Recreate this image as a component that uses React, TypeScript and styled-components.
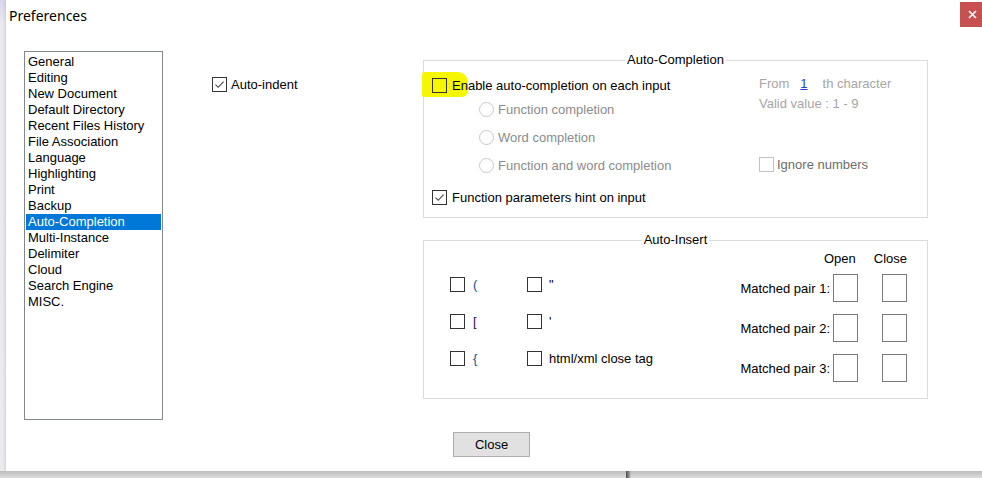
import { Fragment } from 'react';
import styled, { createGlobalStyle } from 'styled-components';

const GlobalStyle = createGlobalStyle`
  html, body {
    margin: 0;
    padding: 0;
  }
  body {
    width: 982px;
    height: 478px;
    overflow: hidden;
    font-family: "Liberation Sans", Arial, sans-serif;
    font-size: 13px;
    color: #000;
  }
`;

const Page = styled.div`
  width: 982px;
  height: 478px;
  display: flex;
  flex-direction: column;
  background: linear-gradient(to bottom, #d9d6ee 0, #e9e9ee 24px, #ececee 100%);
`;

const Dialog = styled.div`
  margin-left: 6px;
  height: 471px;
  flex: none;
  background: #fff;
  display: flex;
  flex-direction: column;
  overflow: hidden;
  box-shadow: -1px 0 3px rgba(0, 0, 0, 0.12);
`;

const BehindWindow = styled.div`
  height: 7px;
  flex: none;
  background:
    linear-gradient(to right, transparent 626px, #4a4a4a 626px, #8c8c8c 629px, transparent 631px),
    linear-gradient(to bottom, #bcbcbc, #dedede);
`;

const TitleBar = styled.div`
  height: 30px;
  display: flex;
  justify-content: space-between;
  align-items: flex-start;
`;

const Title = styled.div`
  padding: 6px 0 0 3px;
  font-family: "Noto Sans", sans-serif;
  font-size: 14px;
  line-height: 20px;
`;

const CloseX = styled.div`
  margin-top: 2px;
  width: 22px;
  height: 25px;
  background: #c75050;
  display: flex;
  align-items: center;
  justify-content: center;
  padding-left: 3px;
  box-sizing: border-box;
`;

const Content = styled.div`
  display: flex;
  align-items: flex-start;
`;

const ListBox = styled.div`
  margin: 21px 0 0 18px;
  width: 139px;
  height: 369px;
  box-sizing: border-box;
  border: 1px solid #828790;
  padding: 2px 1px;
  flex: none;
`;

const ListItem = styled.div<{ $selected?: boolean }>`
  height: 16px;
  line-height: 16px;
  padding-left: 2px;
  background: ${(p) => (p.$selected ? '#0078d7' : 'transparent')};
  color: ${(p) => (p.$selected ? '#fff' : '#000')};
  white-space: nowrap;
`;

const MiddleCol = styled.div`
  width: 260px;
  flex: none;
  box-sizing: border-box;
  padding: 46px 0 0 49px;
`;

const RightCol = styled.div`
  width: 505px;
  flex: none;
  margin-top: 30px;
  display: flex;
  flex-direction: column;
  gap: 22px;
`;

const Group = styled.div<{ $height: number }>`
  position: relative;
  height: ${(p) => p.$height}px;
  box-sizing: border-box;
  border: 1px solid #dcdcdc;
  display: flex;
`;

const GroupTitle = styled.div`
  position: absolute;
  top: -9px;
  left: 50%;
  transform: translateX(-50%);
  background: #fff;
  padding: 0 2px;
  line-height: 16px;
  white-space: nowrap;
`;

const Row = styled.div<{ $indent?: number; $gap?: number; $top?: number }>`
  position: relative;
  display: flex;
  align-items: center;
  height: 16px;
  margin-left: ${(p) => p.$indent ?? 0}px;
  margin-top: ${(p) => p.$top ?? 0}px;
  gap: ${(p) => p.$gap ?? 5}px;
  white-space: nowrap;
`;

const Label = styled.span<{ $tone?: 'normal' | 'disabled' | 'faint' | 'muted' }>`
  position: relative;
  color: ${(p) =>
    p.$tone === 'disabled'
      ? '#8b8b8b'
      : p.$tone === 'faint'
      ? '#a6a6a6'
      : p.$tone === 'muted'
      ? '#6d6d6d'
      : '#000'};
`;

const Box = styled.span<{ $disabled?: boolean }>`
  position: relative;
  width: 15px;
  height: 15px;
  flex: none;
  box-sizing: border-box;
  border: 1px solid ${(p) => (p.$disabled ? '#c2c2c2' : '#333')};
  display: flex;
  align-items: center;
  justify-content: center;
`;

const Radio = styled.span`
  width: 15px;
  height: 15px;
  flex: none;
  box-sizing: border-box;
  border: 1px solid #c8c8c8;
  border-radius: 50%;
  background: #fff;
`;

const Highlight = styled.span`
  position: absolute;
  left: -10px;
  top: -5px;
  width: 46px;
  height: 25px;
  background: #f6f600;
  border-radius: 3px 10px 6px 2px;
  filter: blur(0.7px);
`;

const CompletionLeft = styled.div`
  width: 327px;
  flex: none;
  padding: 16px 0 0 8px;
  display: flex;
  flex-direction: column;
`;

const RadioList = styled.div`
  margin-top: 8px;
  display: flex;
  flex-direction: column;
  gap: 12px;
`;

const CompletionRight = styled.div`
  padding-top: 14px;
  display: flex;
  flex-direction: column;
  gap: 4px;
`;

const CharLink = styled.span`
  color: #2a3bd6;
  text-decoration: underline;
  margin: 0 15px 0 11px;
`;

const InsertBody = styled.div`
  flex: 1;
  display: flex;
  justify-content: space-between;
  align-items: flex-start;
  padding: 0 20px 0 26px;
`;

const CharGrid = styled.div`
  margin-top: 35px;
  display: grid;
  grid-template-columns: 77px auto;
  row-gap: 21px;
`;

const Bracket = styled.span<{ $color: string }>`
  color: ${(p) => p.$color};
  margin-left: 2px;
`;

const PairGrid = styled.div`
  margin-top: 10px;
  display: grid;
  grid-template-columns: auto 25px 49px;
  row-gap: 12px;
  align-items: center;
`;

const PairHead = styled.div<{ $align: 'start' | 'end'; $shift?: number }>`
  justify-self: ${(p) => p.$align};
  margin-left: ${(p) => p.$shift ?? 0}px;
  line-height: 16px;
  margin-bottom: -5px;
  white-space: nowrap;
`;

const PairLabel = styled.div`
  padding-right: 3px;
  text-align: right;
  white-space: nowrap;
`;

const PairBox = styled.div<{ $end?: boolean }>`
  width: 25px;
  height: 28px;
  box-sizing: border-box;
  border: 1px solid #7a7a7a;
  justify-self: ${(p) => (p.$end ? 'end' : 'start')};
`;

const Footer = styled.div`
  padding: 12px 0 0 447px;
`;

const Button = styled.button`
  width: 77px;
  height: 25px;
  background: #e1e1e1;
  border: 1px solid #adadad;
  font-family: "Liberation Sans", Arial, sans-serif;
  font-size: 13px;
  color: #000;
  padding: 0;
`;

const Check = ({ checked, disabled }: { checked?: boolean; disabled?: boolean }) => (
  <Box $disabled={disabled}>
    {checked && (
      <svg width="11" height="11" viewBox="0 0 11 11">
        <path d="M1.5 5.6 L4.2 8.3 L9.6 2.6" fill="none" stroke="#444" strokeWidth="1.1" />
      </svg>
    )}
  </Box>
);

const pages = [
  'General',
  'Editing',
  'New Document',
  'Default Directory',
  'Recent Files History',
  'File Association',
  'Language',
  'Highlighting',
  'Print',
  'Backup',
  'Auto-Completion',
  'Multi-Instance',
  'Delimiter',
  'Cloud',
  'Search Engine',
  'MISC.',
];

const radios = ['Function completion', 'Word completion', 'Function and word completion'];

const chars = [
  { left: '(', color: '#0d4f96', right: '"' },
  { left: '[', color: '#2e0c44', right: "'" },
  { left: '{', color: '#0d4f96', right: 'html/xml close tag' },
];

export default function App() {
  return (
    <Page>
      <GlobalStyle />
      <Dialog>
        <TitleBar>
          <Title>Preferences</Title>
          <CloseX>
            <svg width="9" height="9" viewBox="0 0 9 9">
              <path d="M1 1 L8 8 M8 1 L1 8" stroke="#fff" strokeWidth="1.6" />
            </svg>
          </CloseX>
        </TitleBar>
        <Content>
          <ListBox>
            {pages.map((p) => (
              <ListItem key={p} $selected={p === 'Auto-Completion'}>
                {p}
              </ListItem>
            ))}
          </ListBox>
          <MiddleCol>
            <Row $gap={4}>
              <Check checked />
              <Label>Auto-indent</Label>
            </Row>
          </MiddleCol>
          <RightCol>
            <Group $height={158}>
              <GroupTitle>Auto-Completion</GroupTitle>
              <CompletionLeft>
                <Row>
                  <Highlight />
                  <Check />
                  <Label>Enable auto-completion on each input</Label>
                </Row>
                <RadioList>
                  {radios.map((r) => (
                    <Row key={r} $indent={47} $gap={4}>
                      <Radio />
                      <Label $tone="disabled">{r}</Label>
                    </Row>
                  ))}
                </RadioList>
                <Row $top={16}>
                  <Check checked />
                  <Label>Function parameters hint on input</Label>
                </Row>
              </CompletionLeft>
              <CompletionRight>
                <Row $gap={0}>
                  <Label $tone="faint">From</Label>
                  <CharLink>1</CharLink>
                  <Label $tone="faint">th character</Label>
                </Row>
                <Row>
                  <Label $tone="faint">Valid value : 1 - 9</Label>
                </Row>
                <Row $top={41} $gap={3}>
                  <Check disabled />
                  <Label $tone="muted">Ignore numbers</Label>
                </Row>
              </CompletionRight>
            </Group>
            <Group $height={159}>
              <GroupTitle>Auto-Insert</GroupTitle>
              <InsertBody>
                <CharGrid>
                  {chars.map((c) => (
                    <Fragment key={c.left}>
                      <Row $gap={6}>
                        <Check />
                        <Bracket $color={c.color}>{c.left}</Bracket>
                      </Row>
                      <Row $gap={7}>
                        <Check />
                        <Label>{c.right}</Label>
                      </Row>
                    </Fragment>
                  ))}
                </CharGrid>
                <PairGrid>
                  <span />
                  <PairHead $align="start" $shift={-9}>Open</PairHead>
                  <PairHead $align="end">Close</PairHead>
                  {[1, 2, 3].map((n) => (
                    <Fragment key={n}>
                      <PairLabel>Matched pair {n}:</PairLabel>
                      <PairBox />
                      <PairBox $end />
                    </Fragment>
                  ))}
                </PairGrid>
              </InsertBody>
            </Group>
          </RightCol>
        </Content>
        <Footer>
          <Button>Close</Button>
        </Footer>
      </Dialog>
      <BehindWindow />
    </Page>
  );
}
